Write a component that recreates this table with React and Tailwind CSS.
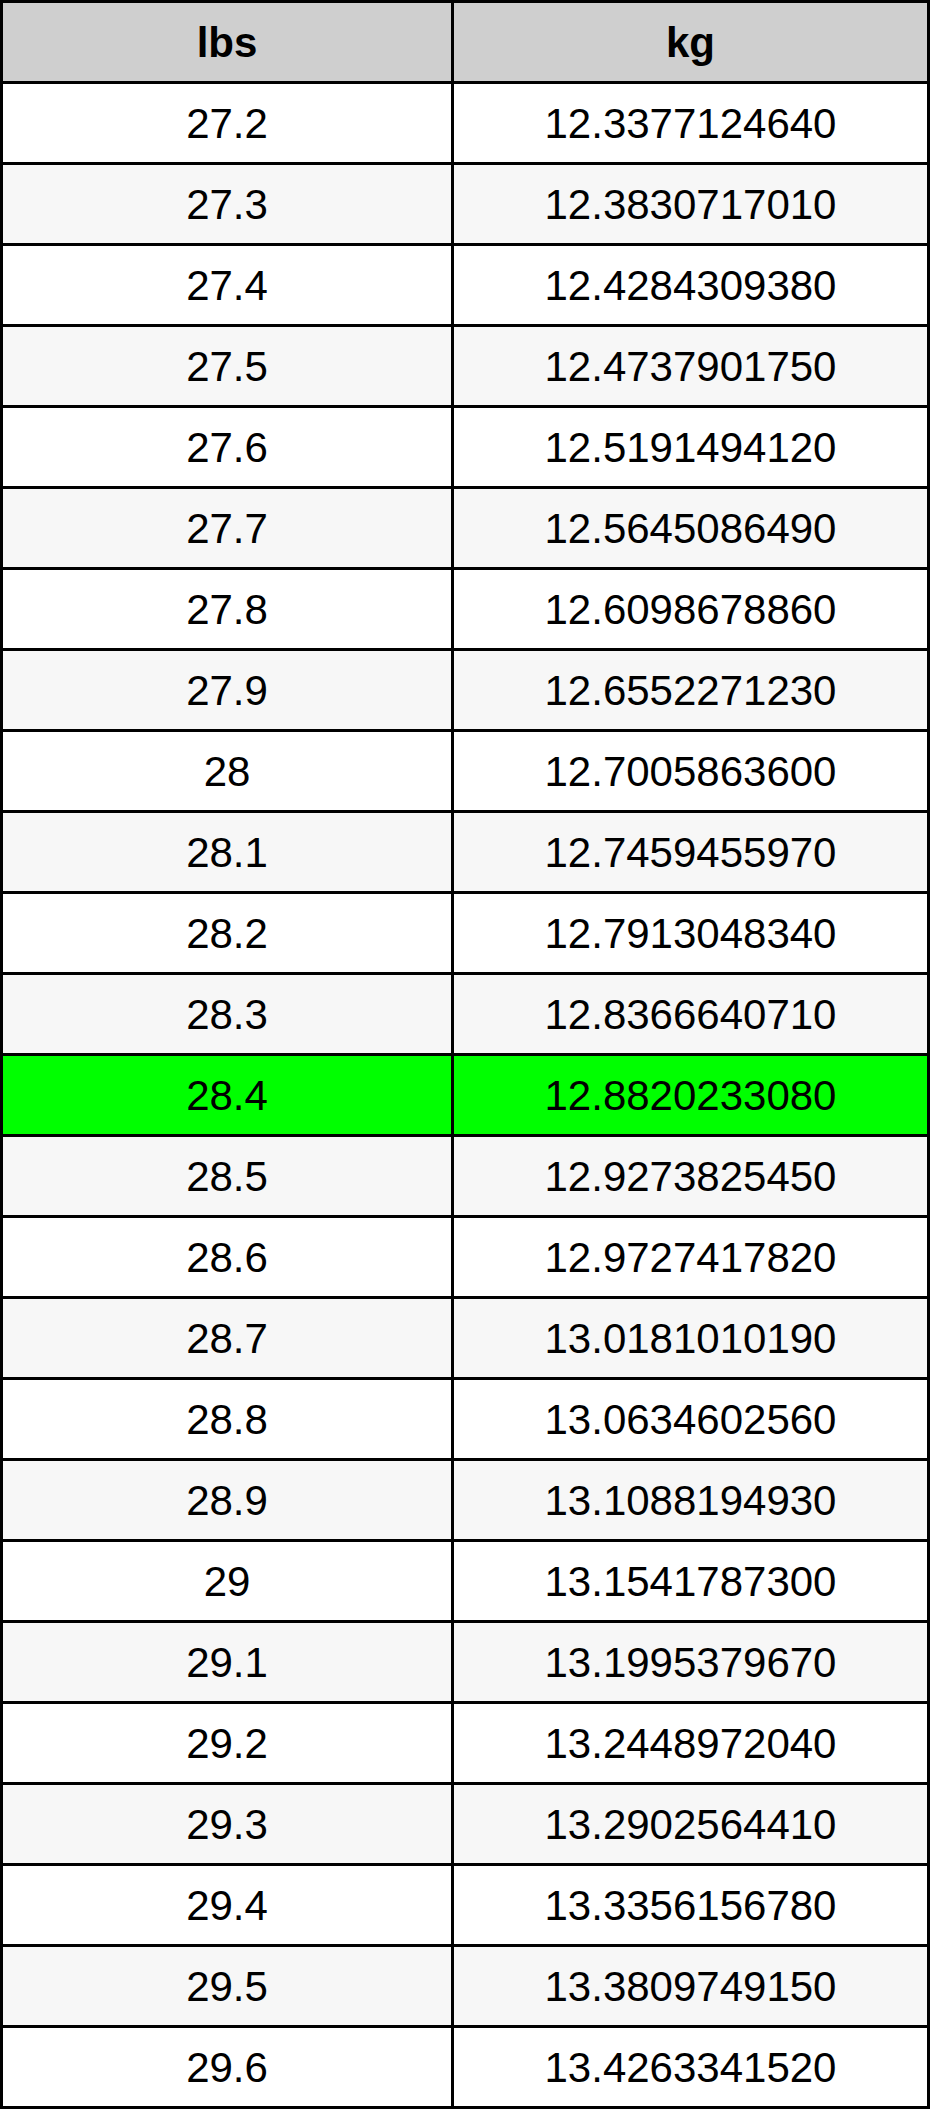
import React from "react";

const rows = [
  ["27.2", "12.3377124640"],
  ["27.3", "12.3830717010"],
  ["27.4", "12.4284309380"],
  ["27.5", "12.4737901750"],
  ["27.6", "12.5191494120"],
  ["27.7", "12.5645086490"],
  ["27.8", "12.6098678860"],
  ["27.9", "12.6552271230"],
  ["28", "12.7005863600"],
  ["28.1", "12.7459455970"],
  ["28.2", "12.7913048340"],
  ["28.3", "12.8366640710"],
  ["28.4", "12.8820233080"],
  ["28.5", "12.9273825450"],
  ["28.6", "12.9727417820"],
  ["28.7", "13.0181010190"],
  ["28.8", "13.0634602560"],
  ["28.9", "13.1088194930"],
  ["29", "13.1541787300"],
  ["29.1", "13.1995379670"],
  ["29.2", "13.2448972040"],
  ["29.3", "13.2902564410"],
  ["29.4", "13.3356156780"],
  ["29.5", "13.3809749150"],
  ["29.6", "13.4263341520"],
];

export default function App() {
  return (
    <div className="w-[930px] h-[2115px] bg-white" style={{ fontFamily: '"Liberation Sans", Arial, sans-serif' }}>
      <div className="grid grid-cols-[448px_473px] auto-rows-[78px] gap-[3px] p-[3px] bg-black text-black text-[42px]">
        <div className="bg-[#cfcfcf] flex items-center justify-center font-bold">lbs</div>
        <div className="bg-[#cfcfcf] flex items-center justify-center font-bold">kg</div>
        {rows.map(([a, b], i) => {
          const bg = a === "28.4" ? "bg-[#00ff00]" : i % 2 === 0 ? "bg-white" : "bg-[#f7f7f7]";
          return (
            <React.Fragment key={a}>
              <div className={`${bg} flex items-center justify-center`}>{a}</div>
              <div className={`${bg} flex items-center justify-center`}>{b}</div>
            </React.Fragment>
          );
        })}
      </div>
    </div>
  );
}
